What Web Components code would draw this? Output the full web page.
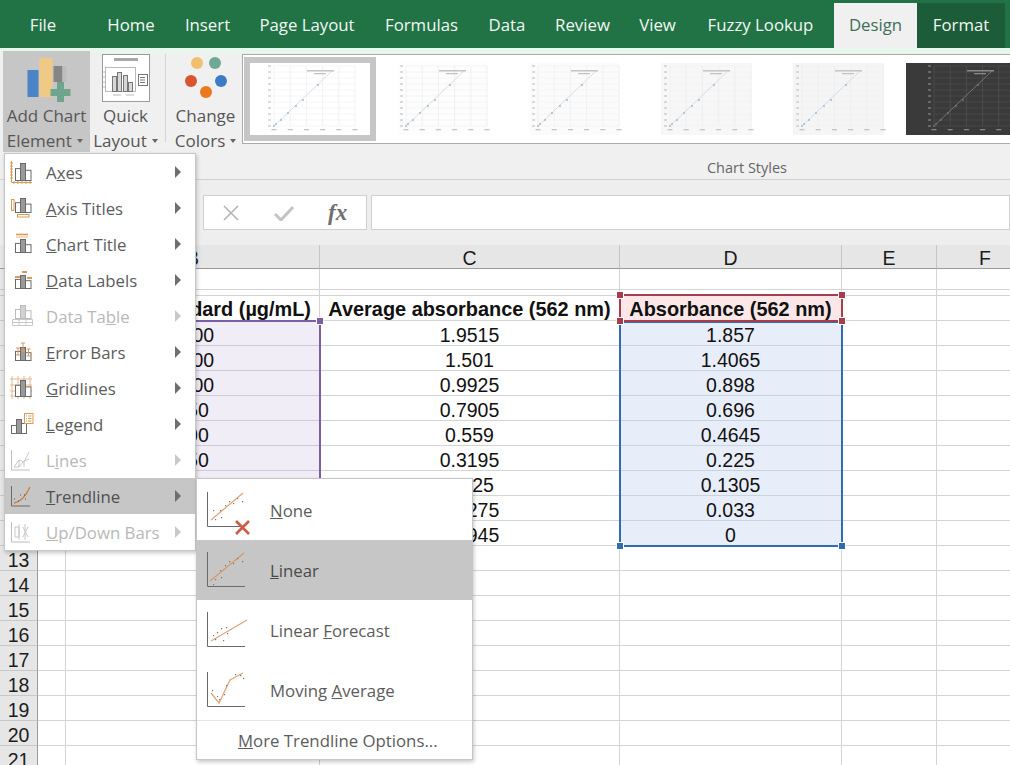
<!DOCTYPE html>
<html><head><meta charset="utf-8"><title>Excel</title>
<style>
html,body{margin:0;padding:0;background:#fff}
body{font-family:"Open Sans","Liberation Sans",sans-serif}
</style></head><body>
<x-app>
  <x-tabbar>
    <x-tab style="width:86px">File</x-tab><x-tab style="width:90px">Home</x-tab><x-tab style="width:63px">Insert</x-tab><x-tab style="width:136px">Page Layout</x-tab><x-tab style="width:93px">Formulas</x-tab><x-tab style="width:78px">Data</x-tab><x-tab style="width:73px">Review</x-tab><x-tab style="width:77px">View</x-tab><x-tab style="width:129px;margin-right:9px">Fuzzy Lookup</x-tab><x-tab active style="width:83px">Design</x-tab><x-tab dark style="width:88px">Format</x-tab>
  </x-tabbar>
  <x-ribbon>
    <x-rbtn active style="width:87px" icon="add">Add Chart<span slot="l2">Element</span></x-rbtn>
    <x-rbtn style="width:71px" icon="quick">Quick<span slot="l2">Layout</span></x-rbtn>
    <x-rsep></x-rsep>
    <x-rbtn style="width:73px;margin-left:3px" icon="colors">Change<span slot="l2">Colors</span></x-rbtn>
    <x-gallery>
      <x-thumb selected></x-thumb><x-thumb></x-thumb><x-thumb shade="#fbfbfb"></x-thumb><x-thumb shade="#f7f7f7" ></x-thumb><x-thumb shade="#f5f5f5"></x-thumb><x-thumb dark></x-thumb>
    </x-gallery>
  </x-ribbon>
  <x-formula></x-formula>
  <x-sheet></x-sheet>

  <x-menu style="left:4px;top:153px;width:190px">
    <x-item icon="axes"><span>A<u>x</u>es</span></x-item>
    <x-item icon="titles"><span><u>A</u>xis Titles</span></x-item>
    <x-item icon="ctitle"><span><u>C</u>hart Title</span></x-item>
    <x-item icon="labels"><span><u>D</u>ata Labels</span></x-item>
    <x-item icon="table" disabled><span>Data Ta<u>b</u>le</span></x-item>
    <x-item icon="errors"><span><u>E</u>rror Bars</span></x-item>
    <x-item icon="grid"><span><u>G</u>ridlines</span></x-item>
    <x-item icon="legend"><span><u>L</u>egend</span></x-item>
    <x-item icon="lines" disabled><span>L<u>i</u>nes</span></x-item>
    <x-item icon="trend" active><span><u>T</u>rendline</span></x-item>
    <x-item icon="updown" disabled><span><u>U</u>p/Down Bars</span></x-item>
  </x-menu>
  <x-submenu style="left:196px;top:478px;width:275px">
    <x-subitem icon="none"><span><u>N</u>one</span></x-subitem>
    <x-subitem icon="linear" active><span><u>L</u>inear</span></x-subitem>
    <x-subitem icon="forecast"><span>Linear <u>F</u>orecast</span></x-subitem>
    <x-subitem icon="moving"><span>Moving <u>A</u>verage</span></x-subitem>
    <x-subfoot><span><u>M</u>ore Trendline Options...</span></x-subfoot>
  </x-submenu>
</x-app>
<script>
function def(name, css, html, extra){
  const C = class extends HTMLElement{
    constructor(){super();const r=this.attachShadow({mode:'open'});r.innerHTML='<style>'+css+'</style>'+html;}
    connectedCallback(){ if(extra) extra.call(this,this.shadowRoot); }
  };
  customElements.define(name,C);
}
def('x-app',':host{position:relative;width:1010px;height:765px;overflow:hidden;display:flex;flex-direction:column}','<slot></slot>');
def('x-tabbar',':host{display:flex;height:48px;background:#217346;flex:none;overflow:hidden}','<slot></slot>');
def('x-tab',`:host{display:flex;align-items:center;justify-content:center;box-sizing:border-box;height:45px;margin-top:3px;color:#f2f7f3;font:16.8px "Open Sans",sans-serif;white-space:nowrap;padding-bottom:2px;flex:none}
:host([active]){background:#f0f0f0;color:#3f6f57}
:host([dark]){background:#1c5c38}`,'<slot></slot>');
const ribIcons={
add:`<svg width="66" height="48" viewBox="0 0 66 48"><rect x="13.5" y="15" width="11" height="27" fill="#4a84c4"/><rect x="25.5" y="3" width="13" height="39" fill="#f0c987"/><rect x="39.5" y="11" width="9" height="16" fill="#858585"/><rect x="48.5" y="11" width="4" height="16" fill="#bdbdbd"/><path d="M43 27h7v7h6.5v7H50v6h-7v-6h-6.5v-7H43z" fill="#6fa58c"/></svg>`,
quick:`<svg style="margin-bottom:1px" width="48" height="48" viewBox="0 0 48 48"><rect x=".5" y=".5" width="47" height="47" fill="#fff" stroke="#9a9a9a"/><rect x="12" y="4" width="24" height="3" fill="#a8a8a8"/><rect x="3.5" y="13.5" width="30" height="24" fill="none" stroke="#aaa" stroke-width=".8"/><path d="M1 18h3M1 23h3M1 28h3M1 33h3" stroke="#aaa" stroke-width=".8"/><rect x="10.5" y="22.5" width="4" height="15" fill="#d8d8d8" stroke="#777"/><rect x="15.5" y="18.5" width="4" height="19" fill="#d8d8d8" stroke="#777"/><rect x="21.5" y="21.5" width="4" height="16" fill="#d8d8d8" stroke="#777"/><rect x="26.5" y="28.5" width="4" height="9" fill="#d8d8d8" stroke="#777"/><rect x="36.5" y="20.5" width="9" height="11" fill="#fff" stroke="#777"/><path d="M38 23.500h5M38 26h5M38 28.500h5" stroke="#777"/><path d="M11 41h8M24 41h8" stroke="#bbb"/></svg>`,
colors:`<svg width="64" height="48" viewBox="0 0 64 48"><circle cx="23" cy="8" r="6" fill="#f0c070"/><circle cx="41" cy="8" r="6" fill="#6fa894"/><circle cx="17" cy="26" r="6" fill="#d9552f"/><circle cx="47" cy="26" r="6" fill="#3d7cc4"/><circle cx="32" cy="37" r="6" fill="#ec7a1c"/></svg>`
};
def('x-rbtn',`:host{display:flex;flex-direction:column;align-items:center;box-sizing:border-box;height:101px;flex:none;margin-top:3px;color:#565656;font:17px/25px "Open Sans",sans-serif;white-space:nowrap}
:host([active]){background:#c6c6c6}
#i{height:52px;flex:none;display:flex;align-items:flex-end;justify-content:center}
#i svg{display:block}
#t{margin-top:0;flex:none;text-align:center}
#l2{display:flex;align-items:center;gap:5px}
#c{width:0;height:0;border:3.5px solid transparent;border-top:4px solid #666;border-bottom:0;}`,
`<div id="i"></div><div id="t"><div><slot></slot></div><div id="l2"><slot name="l2"></slot><span id="c"></span></div></div>`,
function(r){r.getElementById('i').innerHTML=ribIcons[this.getAttribute('icon')];});
def('x-rsep',':host{display:block;width:1px;height:88px;margin:6px 0 0 4px;background:#d4d4d4;flex:none}','');
def('x-ribbon',`:host{display:flex;height:132px;flex:none;box-sizing:border-box;padding-left:3px;border-bottom:1px solid #d2d2d2;overflow:hidden;
background:linear-gradient(#e6f8ec 0 5px,#f0f0f0 5px)}`,'<slot></slot>');
def('x-gallery',`:host{display:block;flex:none;width:1010px;margin-top:6px}
#g{display:flex;box-sizing:border-box;height:90px;background:#fff;border:1px solid #ababab;border-right:0;padding:2px 0 0 1px;overflow:hidden}
#n{text-align:center;color:#666;font:14.5px/20px "Open Sans",sans-serif;margin-top:14px}`,
`<div id="g"><slot></slot></div><div id="n">Chart Styles</div>`);
function thumbSvg(dark,selected,shade){
  const grid=dark?'#555':'#ececec', dot=dark?'#777':'#9db3cc', lab=dark?'#888':'#c4c4c4', line=dark?'#8a8a8a':'#c4d2e0';
  let s='';
  if(dark) s+='<rect width="120" height="72" fill="#3a3a3a" x="-4"/><rect x="116" width="20" height="72" fill="#3a3a3a"/>';
  else if(selected) s+='<rect width="120" height="72" fill="#fff"/>';
  else s+=`<rect x="15" width="91" height="72" fill="${shade||'#fdfdfd'}"/>`;
  for(let i=0;i<6;i++){const x=24+i*16.2;s+=`<path d="M${x} 3V63" stroke="${grid}" stroke-width=".7"/>`;}
  for(let i=0;i<11;i++){const y=3+i*6;s+=`<path d="M24 ${y}H105" stroke="${grid}" stroke-width=".5"/><rect x="18" y="${y-.6}" width="3" height="1.2" fill="${lab}"/>`;}
  for(let i=0;i<6;i++){const x=24+i*16.2;s+=`<rect x="${x-2.5}" y="66" width="5" height="1.3" fill="${lab}"/>`;}
  s+=`<path d="M24 63L82 8" stroke="${line}" stroke-width=".7"/>`;
  [[24,63],[26,61],[31,57],[38,50],[46,43],[53,37],[68,22]].forEach(p=>{s+=`<circle cx="${p[0]}" cy="${p[1]}" r=".9" fill="${dot}"/>`;});
  s+=`<rect x="57" y="7" width="27" height="1.5" fill="${lab}"/><rect x="64" y="10" width="12" height="1.3" fill="${lab}"/>`;
  return `<svg width="120" height="72" viewBox="0 0 120 72" style="display:block;overflow:visible">${s}</svg>`;
}
def('x-thumb',`:host{display:flex;align-items:center;justify-content:center;width:132px;height:84px;flex:none;box-sizing:border-box}
:host([selected]){background:#c6c6c6}`,'<div id="s"></div>',function(r){
 r.getElementById('s').innerHTML=thumbSvg(this.hasAttribute('dark'),this.hasAttribute('selected'),this.getAttribute('shade'));});
def('x-formula',`:host{display:flex;height:65px;box-sizing:border-box;flex:none;background:#eeeeee;padding:15px 0 0 203px;gap:4px}
.b{background:#fff;border:1px solid #d0d0d0;height:35px;box-sizing:border-box}
#a{width:164px;display:flex;align-items:center}
#c{flex:1}
#a svg{display:block;flex:none}
#fx{font:italic bold 23px "Liberation Serif",serif;color:#6f6f6f;margin-left:34px;line-height:1}`,
`<div id="a" class="b"><svg width="16" height="16" viewBox="0 0 16 16" style="margin-left:19px"><path d="M1 1L15 15M15 1L1 15" stroke="#b4b4b4" stroke-width="1.6"/></svg><svg width="20" height="16" viewBox="0 0 20 16" style="margin-left:35px"><path d="M1 9l6 6L19 2" fill="none" stroke="#c4c4c4" stroke-width="3"/></svg><span id="fx">fx</span></div><div id="c" class="b"></div>`);
def('x-sheet',`:host{display:block;position:relative;flex:1;overflow:hidden;background:#fff}
#g{display:grid;grid-template-columns:38px 28px 254px 300px 222px 95px 97px;grid-template-rows:24px 21px 6px 25px repeat(20,25px);font:19.5px "Liberation Sans",Arial,sans-serif;color:#111}
.c{box-sizing:border-box;border-right:1px solid #d4d4d4;border-bottom:1px solid #d4d4d4;display:flex;align-items:center;justify-content:center;white-space:nowrap;min-width:0;overflow:visible;line-height:1;padding-top:5px}
.h{background:#e6e6e6;border-bottom:1px solid #9a9a9a;border-right:1px solid #c4c4c4;color:#1c1c1c;padding-top:4px}
.r{background:#e6e6e6;border-right:1px solid #9a9a9a;border-bottom:1px solid #c8c8c8;color:#1c1c1c}
.b{font-weight:bold;font-size:19.9px;padding-top:3px}
.e{justify-content:flex-end;padding-right:8px}
.p{background:#f1edf7;border-color:#cfcad8;border-right-color:#e0dbe8}
.rd{background:#fbe7e7}
.bl{background:#e7eef9;border-color:#c9d3e0}`,
`<div id="g"></div><slot></slot>
<x-range style="left:60px;top:75px;width:261px;height:227px" color="#7a5ea8" corners="tr" noleft></x-range>
<x-range style="left:619px;top:76px;width:224px;height:226px" color="#2f6cb3" corners="bl br"></x-range>
<x-range style="left:619px;top:49px;width:224px;height:28px" color="#a83b4c" corners="tl tr bl br"></x-range>`,
function(r){
 const g=r.getElementById('g');
 const cols=['','B','C','D','E','F'];
 const B=['2000','1500','1000','750','500','250','125','25','0'];
 const C=['1.9515','1.501','0.9925','0.7905','0.559','0.3195','0.225','0.1275','0.0945'];
 const D=['1.857','1.4065','0.898','0.696','0.4645','0.225','0.1305','0.033','0'];
 let h='<div class="c h"></div>'+cols.map(c=>`<div class="c h">${c}</div>`).join('');
 for(let i=1;i<=21;i++){
  h+=`<div class="c r">${i>=13?i:''}</div>`;
  let b='',c='',d='',bc='c',dc='c',cc='c';
  if(i==3){b='dard (µg/mL)';c='Average absorbance (562 nm)';d='Absorbance (562 nm)';bc='c b e';cc='c b';dc='c b rd';}
  if(i>=4&&i<=12){b=B[i-4];c=C[i-4];d=D[i-4];bc='c p';dc='c bl';}
  h+=`<div class="c"></div><div class="${bc}">${b}</div><div class="${cc}">${c}</div><div class="${dc}">${d}</div><div class="c"></div><div class="c"></div>`;
 }
 g.innerHTML=h;
});
def('x-range',`:host{display:block;position:absolute;box-sizing:border-box;border:2px solid var(--k);pointer-events:none}
:host([noleft]){border-left:0;border-bottom:0}
i{position:absolute;width:6px;height:6px;background:var(--k);display:none;outline:1px solid #fff}`,
`<i id="tl" style="left:-4px;top:-4px"></i><i id="tr" style="right:-4px;top:-4px"></i><i id="bl" style="left:-4px;bottom:-4px"></i><i id="br" style="right:-4px;bottom:-4px"></i>`,
function(r){this.style.setProperty('--k',this.getAttribute('color'));(this.getAttribute('corners')||'').split(' ').forEach(c=>{r.getElementById(c).style.display='block';});});
const O='#dc9a58',G='#6a6a6a',F='#9a9a9a';
/* three bars: t = top of the tallest bar, b = common baseline */
const bars=(t,b,dx=0)=>{const h=b-t;return `<g transform="translate(${dx} 0)"><rect x="5.500" y="${t+h*.3}" width="5" height="${h*.7}" fill="#fff" stroke="${G}"/><rect x="10.500" y="${t}" width="5" height="${h}" fill="${F}" stroke="${G}"/><rect x="15.500" y="${t+h*.4}" width="5.500" height="${h*.6}" fill="#fff" stroke="${G}"/></g>`;};
const icons={
axes:bars(3.5,20.5)+`<path d="M1.500 1V22.500H22M0 3h3M0 6h3M0 9h3M0 12h3M0 15h3M0 18h3M4 21v3M8 21v3M12 21v3M16 21v3M20 21v3" fill="none" stroke="${O}"/>`,
titles:bars(2.5,16.5)+`<rect x="1.500" y="3.500" width="2.500" height="11" fill="#fff" stroke="${O}"/><rect x="7.500" y="18.500" width="11.500" height="2.500" fill="#fff" stroke="${O}"/>`,
ctitle:bars(7.5,20.5)+`<path d="M6 2.500h12" stroke="${O}" stroke-width="1.6"/><path d="M6 5h12" stroke="${O}" opacity=".7"/>`,
labels:bars(7.5,20.5)+`<path d="M5 9h5M12 4h5M17 10h5" stroke="${O}" stroke-width="1.8"/>`,
table:`<g opacity=".45">${bars(1.5,14.5)}</g><path d="M2.500 15.500h20v6h-20zM2.500 18.500h20M9 15.500v6M16 15.500v6" fill="none" stroke="#c8c8c8"/>`,
errors:bars(7.500,20.500)+`<path d="M8 8v7M6 8h4M6 15h4M13 3v8M11 3h4M11 11h4M18.500 9v7M16.500 9h4M16.500 16h4" fill="none" stroke="${O}"/>`,
grid:`<path d="M0 3h22M0 9h22M0 15h22M0 20h22M2 0v23M8 0v23M14 0v23M20 0v23" stroke="${O}" stroke-width=".9" opacity=".75"/>`+bars(4.500,20.500),
legend:`<rect x="1.500" y="13.500" width="5" height="8" fill="#fff" stroke="${G}"/><rect x="6.500" y="7.500" width="5" height="14" fill="${F}" stroke="${G}"/><rect x="11.500" y="11.500" width="5" height="10" fill="#fff" stroke="${G}"/><rect x="14.500" y="1.500" width="8.500" height="10" fill="#fff" stroke="${O}"/><path d="M16 4h1M18 4h3.500M16 6.500h1M18 6.500h3.500M16 9h1M18 9h3.500" stroke="${O}"/>`,
lines:`<path d="M1.500 2V22H20" fill="none" stroke="#bdbdbd"/><path d="M4 19l5-7 5 2 5-10M4 19l5 0 5-6 5-2M9 12v7M14 14v5" fill="none" stroke="#c8c8c8"/>`,
trend:`<path d="M1.500 2V22H20" fill="none" stroke="${G}"/><path d="M4 19C10 18 15 14 20 3" fill="none" stroke="#c97f3c" stroke-width="1.3"/><path d="M4 15h1M8 17h1M10 11h1M14 11h1M15 15h1" stroke="#555"/>`,
updown:`<path d="M1.500 2V22H20" fill="none" stroke="#bdbdbd"/><path d="M5 7h4v10h-4zM13 7l5 10M18 7l-5 10M9 4v16M15 4v16" fill="none" stroke="#c8c8c8"/>`
};
def('x-menu',`:host{display:block;position:absolute;background:#fff;border:1px solid #c6c6c6;box-shadow:1px 2px 4px rgba(0,0,0,.22);z-index:2}`,'<slot></slot>');
def('x-item',`:host{display:flex;align-items:center;height:36px;color:#5c5c5c;font:16.8px "Open Sans",sans-serif;white-space:nowrap}
:host([active]){background:#c6c6c6;color:#505050}
:host([disabled]){color:#b8b8b8}
#i{width:24px;height:24px;margin-left:5px;margin-right:12px;flex:none}
#i svg{display:block}
#a{margin-left:auto;margin-right:14px;width:0;height:0;border:6px solid transparent;border-left:6px solid #6e6e6e;border-right:0}
:host([disabled]) #a{border-left-color:#c8c8c8}`,
`<div id="i"></div><slot></slot><span id="a"></span>`,
function(r){r.getElementById('i').innerHTML=`<svg width="24" height="24" viewBox="0 0 24 24">${icons[this.getAttribute('icon')]}</svg>`;});
const dots=(a)=>a.map(p=>`<rect x="${p[0]}" y="${p[1]}" width="1.200" height="1.200" fill="#777"/>`).join('');
const sub={
none:`<path d="M.5 0V34.500H33" fill="none" stroke="#6a6a6a"/><path d="M4 28L36 1" stroke="#dca87c" stroke-width="1.300"/>`+dots([[8,27],[13,18],[18,13],[22,9],[26,11],[30,6],[35,9],[14,25],[6,18]])+`<path d="M29 29L42 42M42 29L29 42" stroke="#cf5a45" stroke-width="2.600"/>`,
linear:`<path d="M.5 0V34.500H38" fill="none" stroke="#6a6a6a"/><path d="M3 29L37 1" stroke="#d9986a" stroke-width="1.300"/>`+dots([[8,27],[13,18],[18,13],[22,9],[26,11],[30,6],[35,9],[14,25],[6,32]]),
forecast:`<path d="M.5 0V34.500H38" fill="none" stroke="#6a6a6a"/><path d="M4 29L40 8" stroke="#dca87c" stroke-width="1.300"/>`+dots([[8,27],[10,20],[14,16],[19,15],[20,21],[16,28],[6,23]]),
moving:`<path d="M.5 0V34.500H38" fill="none" stroke="#6a6a6a"/><path d="M4 21L12 31L23 8L36 1" fill="none" stroke="#dca87c" stroke-width="1.300"/>`+dots([[5,18],[10,24],[17,22],[19,13],[28,2],[33,3],[12,27],[36,6]])
};
def('x-submenu',`:host{display:block;position:absolute;background:#fff;border:1px solid #c6c6c6;box-shadow:1px 2px 4px rgba(0,0,0,.22);z-index:3;padding-top:1px}`,'<slot></slot>');
def('x-subitem',`:host{display:flex;align-items:center;height:60px;color:#5c5c5c;font:16.8px "Open Sans",sans-serif;white-space:nowrap}
:host([active]){background:#c6c6c6;color:#4a4a4a}
#i{width:46px;height:44px;margin:8px 17px 0 10px;flex:none}
#i svg{display:block;overflow:visible}`,
`<div id="i"></div><slot></slot>`,
function(r){r.getElementById('i').innerHTML=`<svg width="46" height="44" viewBox="0 0 46 44">${sub[this.getAttribute('icon')]}</svg>`;});
def('x-subfoot',`:host{display:flex;align-items:center;box-sizing:border-box;height:39px;padding-left:41px;border-top:1px solid #e4e4e4;color:#5c5c5c;font:16.8px "Open Sans",sans-serif;white-space:nowrap}`,'<slot></slot>');
</script>
</body></html>
